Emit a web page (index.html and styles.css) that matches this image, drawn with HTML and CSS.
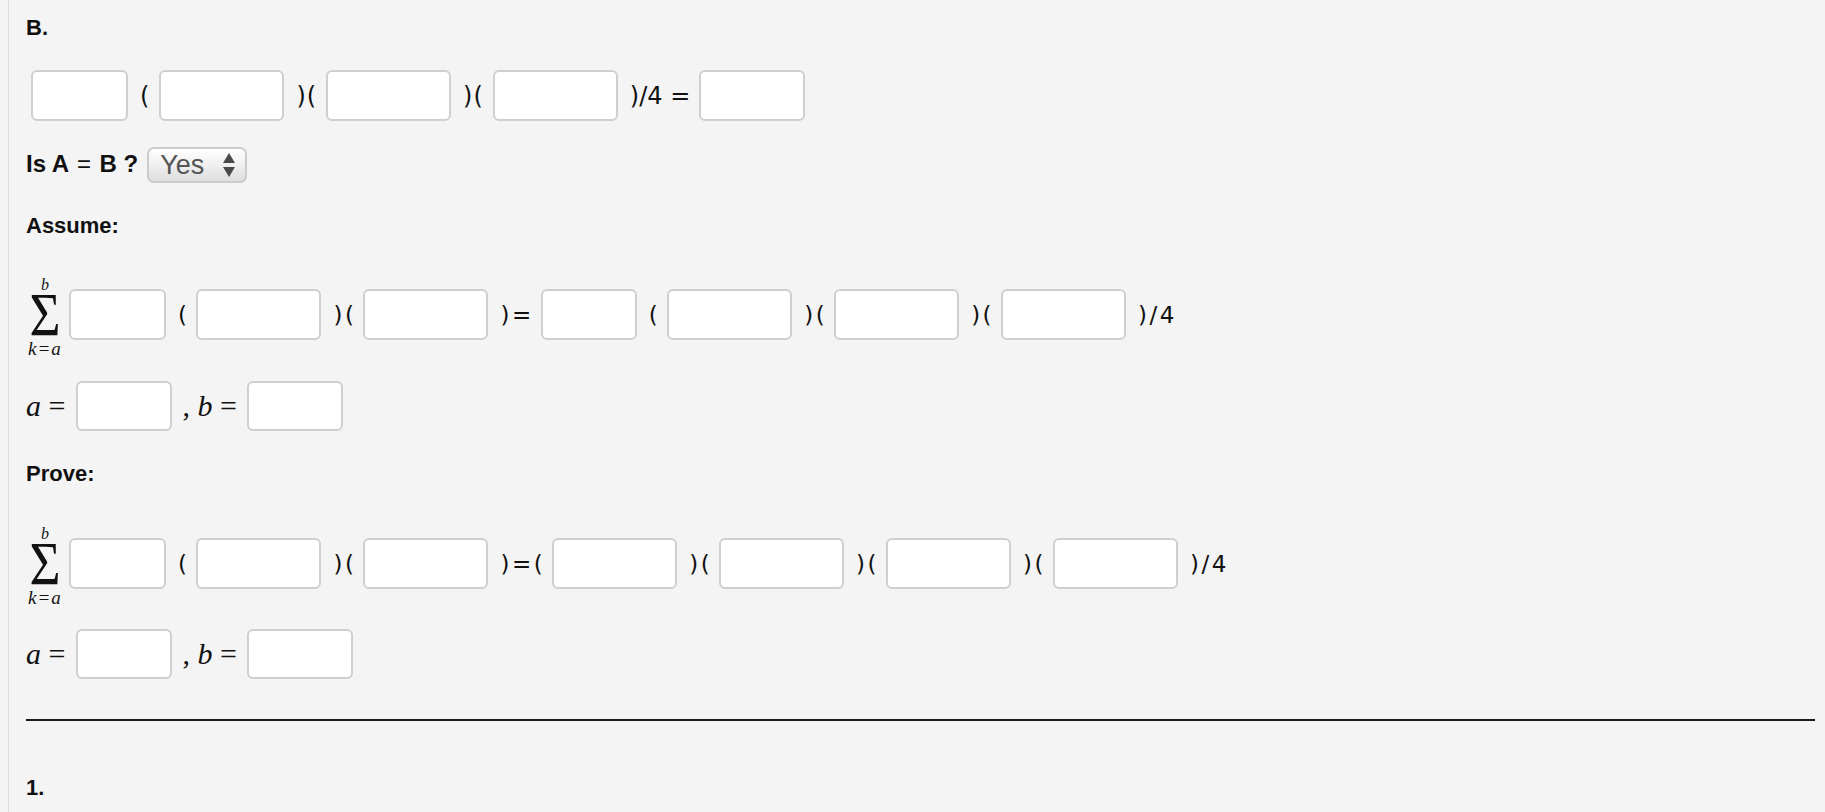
FILE: index.html
```html
<!DOCTYPE html>
<html lang="en">

<head>
  <meta charset="UTF-8">
  <meta name="viewport" content="width=device-width, initial-scale=1.0">
  <title>Part B</title>

  <link rel="stylesheet" href="styles.css">
</head>

<body>
  <div class="page">
    <h3 class="part">B.</h3>

    <div class="row row-b">
      <input class="box w97" type="text">
      <span class="op">(</span>
      <input class="box w125" type="text">
      <span class="op">)(</span>
      <input class="box w125" type="text">
      <span class="op">)(</span>
      <input class="box w125" type="text">
      <span class="op tail">)/4 =</span>
      <input class="box w106" type="text">
    </div>

    <div class="row row-ask">
      <span class="ask">Is A <span class="thin">=</span> B ?</span>
      <span class="pick">
        <select class="yn">
          <option>Yes</option>
          <option>No</option>
        </select>
        <svg class="arrows" width="12" height="24" viewBox="0 0 12 24">
          <path d="M6 0 L12 10 L0 10 Z" fill="#4a4a4a"/>
          <path d="M0 14 L12 14 L6 24 Z" fill="#4a4a4a"/>
        </svg>
      </span>
    </div>

    <h3 class="part part-assume">Assume:</h3>

    <div class="row sum-row">
      <div class="sum">
        <i class="lim lim-top">b</i>
        <span class="sigma">Σ</span>
        <i class="lim lim-bot">k=a</i>
      </div>
      <div class="terms">
        <input class="box w97" type="text">
        <span class="op sm">(</span>
        <input class="box w125" type="text">
        <span class="op sm">)(</span>
        <input class="box w125" type="text">
        <span class="op sm">)=</span>
        <input class="box w96" type="text">
        <span class="op sm">(</span>
        <input class="box w125" type="text">
        <span class="op sm">)(</span>
        <input class="box w125" type="text">
        <span class="op sm">)(</span>
        <input class="box w125" type="text">
        <span class="op sm">)/4</span>
      </div>
    </div>

    <div class="row bounds">
      <span class="math math-a"><i>a</i> =</span>
      <input class="box w96" type="text">
      <span class="math math-b">, <i>b</i> =</span>
      <input class="box w96" type="text">
    </div>

    <h3 class="part part-prove">Prove:</h3>

    <div class="row sum-row sum-row-prove">
      <div class="sum">
        <i class="lim lim-top">b</i>
        <span class="sigma">Σ</span>
        <i class="lim lim-bot">k=a</i>
      </div>
      <div class="terms">
        <input class="box w97" type="text">
        <span class="op sm">(</span>
        <input class="box w125" type="text">
        <span class="op sm">)(</span>
        <input class="box w125" type="text">
        <span class="op sm">)=(</span>
        <input class="box w125" type="text">
        <span class="op sm">)(</span>
        <input class="box w125" type="text">
        <span class="op sm">)(</span>
        <input class="box w125" type="text">
        <span class="op sm">)(</span>
        <input class="box w125" type="text">
        <span class="op sm">)/4</span>
      </div>
    </div>

    <div class="row bounds bounds-prove">
      <span class="math math-a"><i>a</i> =</span>
      <input class="box w96" type="text">
      <span class="math math-b">, <i>b</i> =</span>
      <input class="box w106" type="text">
    </div>

    <hr class="rule">

    <h3 class="part part-next">1.</h3>
  </div>
</body>

</html>
```

FILE: styles.css
```css
/* document */
* {
  box-sizing: border-box;
}

html,
body {
  margin: 0;
  background: #f4f4f4;
}

.page {
  min-height: 100vh;
  margin-left: 8px;
  padding: 15px 10px 0 17px;
  border-left: 1px solid #dcdcdc;
  font-family: "Liberation Sans", Arial, sans-serif;
  color: #111;
}

/* headings */
.part {
  margin: 0;
  font-size: 22px;
  line-height: 26px;
  font-weight: bold;
}

.part-assume,
.part-prove {
  margin-top: 30px;
}

.part-next {
  margin-top: 54px;
}

/* rows */
.row {
  display: flex;
  align-items: center;
}

.row-b {
  margin-top: 29px;
  height: 51px;
}

.box {
  height: 51px;
  margin: 0 5px;
  border: 2px solid #cfcfcf;
  border-radius: 6px;
  background: #fff;
  font-size: 18px;
  padding: 0 8px;
}

.w96 { width: 96px; }
.w97 { width: 97px; }
.w106 { width: 106px; }
.w125 { width: 125px; }

.op {
  padding: 0 4px 0 7px;
  font-family: "DejaVu Sans", sans-serif;
  font-size: 24px;
  letter-spacing: 1px;
  color: #111;
  white-space: pre;
}

.op.tail {
  letter-spacing: 0;
}

.op.sm {
  font-size: 23px;
  letter-spacing: 2.5px;
  padding-right: 2px;
}

/* yes / no question */
.row-ask {
  margin-top: 26px;
  height: 36px;
}

.ask {
  font-size: 24px;
  font-weight: bold;
  margin-top: -3px;
}

.ask .thin {
  font-weight: normal;
  padding: 0 2px;
}

.pick {
  position: relative;
  margin-left: 9px;
}

.yn {
  -webkit-appearance: none;
  appearance: none;
  width: 100px;
  height: 36px;
  padding: 0 0 0 11px;
  border: 2px solid #cbcbcb;
  border-radius: 7px;
  background: linear-gradient(#ffffff, #f1f1f1 45%, #dedede);
  box-shadow: inset 0 1px 0 #fff;
  font-family: "Liberation Sans", Arial, sans-serif;
  font-size: 27px;
  color: #555;
}

.arrows {
  position: absolute;
  left: 76px;
  top: 6px;
  pointer-events: none;
}

/* summation rows */
.sum-row {
  align-items: flex-start;
  margin-top: 39px;
}

.sum-row-prove {
  margin-top: 40px;
}

.sum {
  width: 38px;
  display: flex;
  flex-direction: column;
  align-items: center;
  font-family: "Liberation Serif", "Times New Roman", serif;
}

.lim {
  font-size: 16px;
  line-height: 14px;
}

.lim-bot {
  margin-top: 5px;
  font-size: 19px;
  line-height: 16px;
  letter-spacing: 1px;
}

.sigma {
  font-size: 62px;
  line-height: 44px;
  transform: scaleX(0.86);
}

.terms {
  display: flex;
  align-items: center;
  height: 51px;
  margin-top: 11px;
}

/* a = , b = */
.bounds {
  margin-top: 24px;
  height: 50px;
}

.bounds-prove {
  margin-top: 23px;
}

.bounds .box {
  height: 50px;
}

.math {
  font-family: "Liberation Serif", "Times New Roman", serif;
  font-size: 30px;
  white-space: pre;
  padding-right: 6px;
}

.math-b {
  padding-left: 5px;
  padding-right: 5px;
}

/* divider */
.rule {
  margin: 40px 0 0 0;
  height: 2px;
  border: 0;
  background: #1b1b1b;
}
```
